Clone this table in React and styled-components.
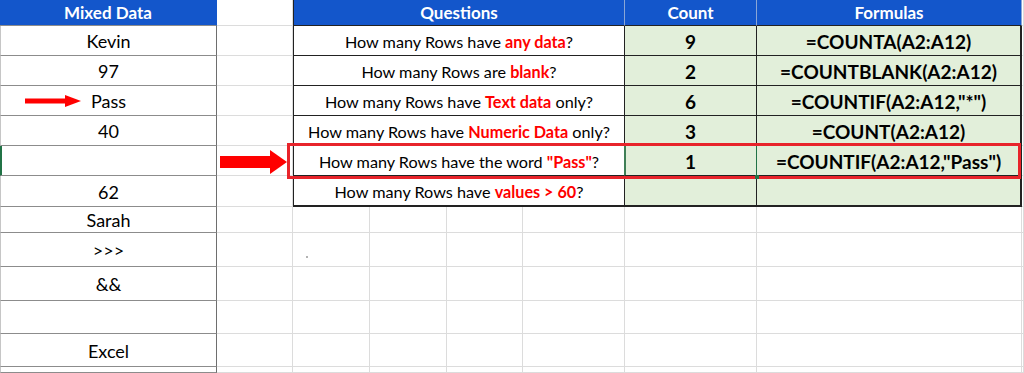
import React from "react";
import styled, { createGlobalStyle, css } from "styled-components";

const Global = createGlobalStyle`
  html, body { margin: 0; padding: 0; background: #fff; }
  body { font-family: Lato, "Open Sans", sans-serif; color: #000; }
  * { box-sizing: border-box; }
`;

const Sheet = styled.div`
  position: relative;
  width: 1024px;
  height: 373px;
  overflow: hidden;
  display: grid;
  grid-template-columns: 217px 76px 77px 77px 76px 102px 132px 265px 2px;
  grid-template-rows: 26px repeat(5, 30px) 31px 26px 34px 34px 33px 33px 6px;
  background: #fff;
`;

const Cell = styled.div`
  display: flex;
  align-items: center;
  justify-content: center;
  white-space: nowrap;
  overflow: hidden;
  border-right: 1px solid #dcdcdc;
  border-bottom: 1px solid #dcdcdc;
  grid-column: span ${(p) => p.$span || 1};
`;

const DataCell = styled(Cell)`
  font-size: 18px;
  border-left: 1px solid ${(p) => (p.$active ? "#217346" : "#c6c6c6")};
  ${(p) => p.$active && css`box-shadow: inset 1px 0 0 #217346;`}
  border-right: 1px solid #6e6e6e;
  border-bottom: 1px solid #8c8c8c;
  padding-top: 1px;
`;

const HeadCell = styled(Cell)`
  background: #1356cb;
  color: #fff;
  font-weight: 700;
  font-size: 17px;
  border-right: 1px solid ${(p) => (p.$edge ? "#1356cb" : "#8aa6d6")};
  border-bottom: 1px solid ${(p) => (p.$edge ? "#8c8c8c" : "#222")};
  ${(p) => p.$first && css`border-left: 1px solid #222;`}
  padding-bottom: 1px;
`;

const QuestionCell = styled(Cell)`
  font-size: 16.2px;
  border-left: 1px solid #222;
  border-right: 1px solid ${(p) => (p.$selectedNext ? "#3f7f56" : "#222")};
  border-bottom: 1px solid #222;
  ${(p) => p.$last && css`border-bottom-width: 2px;`}
  padding-top: 1px;
`;

const ValueCell = styled(Cell)`
  background: #e2efda;
  font-size: 19px;
  font-weight: 700;
  border-right: 1px solid ${(p) => (p.$selected ? "#217346" : "#222")};
  ${(p) => p.$outer && css`border-right: 2px solid #222;`}
  border-bottom: 1px solid #222;
  ${(p) => p.$last && css`border-bottom-width: 2px;`}
  ${(p) => p.$selected && css`box-shadow: inset 1px 0 0 #3f7f56;`}
  padding-top: 1px;
`;

const Hot = styled.span`
  color: #ff0000;
  font-weight: 700;
`;

const Overlay = styled.div`
  position: absolute;
  pointer-events: none;
`;

const HighlightBox = styled(Overlay)`
  left: 287px;
  top: 143px;
  width: 734px;
  height: 36px;
  border: 3.5px solid #e8242b;
`;

const ArrowSmall = styled.svg`
  position: absolute;
  left: 25px;
  top: 95px;
`;

const ArrowBig = styled.svg`
  position: absolute;
  left: 220px;
  top: 150px;
`;

const FillHandle = styled(Overlay)`
  left: 755px;
  top: 175px;
  width: 4px;
  height: 4px;
  background: #217346;
`;

const Speck = styled(Overlay)`
  left: 306px;
  top: 256px;
  width: 2px;
  height: 2px;
  background: #9a9a9a;
  border-radius: 1px;
`;

const colA = ["Kevin", "97", "Pass", "40", "", "62", "Sarah", ">>>", "&&", "", "Excel", ""];

const questions = [
  { q: ["How many Rows have ", "any data", "?"], c: "9", f: "=COUNTA(A2:A12)" },
  { q: ["How many Rows are ", "blank", "?"], c: "2", f: "=COUNTBLANK(A2:A12)" },
  { q: ["How many Rows have ", "Text data", " only?"], c: "6", f: '=COUNTIF(A2:A12,"*")' },
  { q: ["How many Rows have ", "Numeric Data", " only?"], c: "3", f: "=COUNT(A2:A12)" },
  { q: ["How many Rows have the word ", '"Pass"', "?"], c: "1", f: '=COUNTIF(A2:A12,"Pass")', sel: true },
  { q: ["How many Rows have ", "values > 60", "?"], c: "", f: "" },
];

export default function App() {
  const rows = [];
  rows.push(
    <React.Fragment key="h">
      <HeadCell $edge>Mixed Data</HeadCell>
      <Cell />
      <HeadCell $span={4} $first>Questions</HeadCell>
      <HeadCell>Count</HeadCell>
      <HeadCell>Formulas</HeadCell>
      <Cell />
    </React.Fragment>
  );
  colA.forEach((v, i) => {
    const t = questions[i];
    rows.push(
      <React.Fragment key={i}>
        <DataCell $active={i === 4}>{v}</DataCell>
        <Cell />
        {t ? (
          <>
            <QuestionCell $span={4} $last={i === 5} $selectedNext={t.sel}>
              <span>
                {t.q[0]}
                <Hot>{t.q[1]}</Hot>
                {t.q[2]}
              </span>
            </QuestionCell>
            <ValueCell $selected={t.sel} $last={i === 5}>{t.c}</ValueCell>
            <ValueCell $outer $last={i === 5}>{t.f}</ValueCell>
          </>
        ) : (
          <>
            <Cell />
            <Cell />
            <Cell />
            <Cell />
            <Cell />
            <Cell />
          </>
        )}
        <Cell />
      </React.Fragment>
    );
  });

  return (
    <>
      <Global />
      <Sheet>
        {rows}
        <ArrowSmall width="56" height="12" viewBox="0 0 56 12">
          <rect x="0" y="3.5" width="41" height="5" fill="#ff0000" />
          <polygon points="40,0 56,6 40,12" fill="#ff0000" />
        </ArrowSmall>
        <ArrowBig width="67" height="24" viewBox="0 0 67 24">
          <rect x="0" y="6" width="51" height="12" fill="#ff0000" />
          <polygon points="50,0 67,12 50,24" fill="#ff0000" />
        </ArrowBig>
        <HighlightBox />
        <FillHandle />
        <Speck />
      </Sheet>
    </>
  );
}
